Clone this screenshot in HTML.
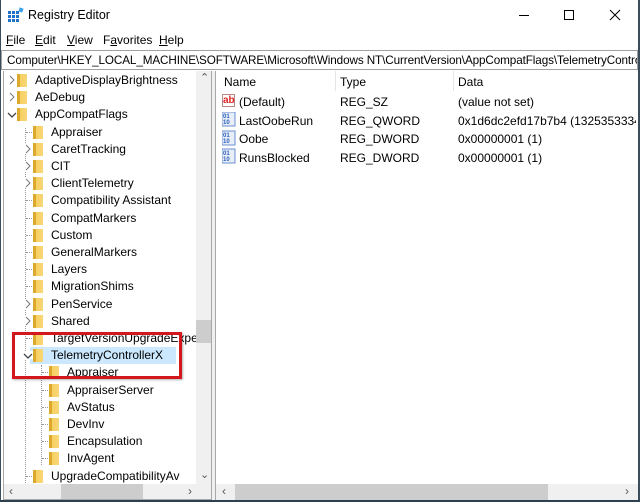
<!DOCTYPE html>
<html><head><meta charset="utf-8"><style>
*{margin:0;padding:0;box-sizing:border-box}
html,body{width:640px;height:502px;overflow:hidden}
body{background:#fff;font-family:"Liberation Sans",sans-serif;font-size:12px;color:#000;position:relative}
.a{position:absolute;white-space:nowrap}
.fold{position:absolute;width:10px;height:13px;background:linear-gradient(90deg,#dca92f 0,#dca92f 3px,#f6cf62 3px,#f8d776 100%)}
.arr{position:absolute;color:#777;font-size:11px;background:#fff}
.t{position:absolute;line-height:17px;height:17px}
.dash{position:absolute;border-top:1px dotted #999;width:6px}
.vl{position:absolute;border-left:1px dotted #999}
.ico{position:absolute;width:13px;height:13px}
</style></head><body>
<div class="a" style="left:0;top:0;width:1px;height:502px;background:#3b4d5a"></div>
<div class="a" style="left:638px;top:0;width:2px;height:502px;background:#3b4d5a"></div>
<div class="a" style="left:0;top:500px;width:640px;height:2px;background:#2d4150"></div>
<svg class="a" style="left:8px;top:7px" width="16" height="16" viewBox="0 0 16 16">
<g fill="#1e73c9"><rect x="0" y="4" width="3" height="3"/><rect x="4" y="4" width="3" height="3"/><rect x="8" y="4" width="3" height="3"/>
<rect x="0" y="8" width="3" height="3"/><rect x="4" y="8" width="3" height="3"/><rect x="8" y="8" width="3" height="3"/>
<rect x="0" y="12" width="3" height="3"/><rect x="4" y="12" width="3" height="3"/><rect x="8" y="12" width="3" height="3"/></g>
<rect x="11" y="1" width="4" height="4" fill="#3aa0e8" transform="rotate(20 13 3)"/></svg>
<div class="a" style="left:28px;top:8px;font-size:12.5px">Registry Editor</div>
<div class="a" style="left:519px;top:15px;width:10px;height:1px;background:#000"></div>
<div class="a" style="left:564px;top:10px;width:10px;height:10px;border:1px solid #000"></div>
<svg class="a" style="left:609px;top:9px" width="12" height="12"><path d="M1 1L11 11M11 1L1 11" stroke="#000" stroke-width="1"/></svg>
<div class="a" style="left:6px;top:33px"><u>F</u>ile</div>
<div class="a" style="left:35px;top:33px"><u>E</u>dit</div>
<div class="a" style="left:67px;top:33px"><u>V</u>iew</div>
<div class="a" style="left:103px;top:33px">F<u>a</u>vorites</div>
<div class="a" style="left:159px;top:33px"><u>H</u>elp</div>
<div class="a" style="left:1px;top:50px;width:637px;height:20px;border:1px solid #a0a0a0;overflow:hidden;padding:3px 0 0 5px;font-size:11.7px;letter-spacing:-0.1px">Computer\HKEY_LOCAL_MACHINE\SOFTWARE\Microsoft\Windows NT\CurrentVersion\AppCompatFlags\TelemetryControllerX</div>
<div class="a" style="left:3px;top:71px;width:209px;height:429px;border:1px solid #a8a8a8;border-top:none;overflow:hidden">
<div id="tree" style="position:absolute;left:-4px;top:0;width:196px;height:413px;overflow:hidden">
<div class="vl" style="left:25px;top:57px;height:405px"></div>
<div class="vl" style="left:41px;top:294px;height:100px"></div>
<div class="a" style="left:30px;top:276px;width:146px;height:17px;background:#cce8ff"></div>
</div>
<div class="a" style="left:192px;top:0;width:16px;height:413px;background:#f0f0f0"></div>
<div class="a" style="left:192px;top:249px;width:16px;height:23px;background:#cdcdcd"></div>
<div class="a" style="left:196px;top:0px;color:#555;font-size:11px">&#8963;</div>
<div class="a" style="left:196px;top:397px;color:#555;font-size:11px">&#8964;</div>
<div class="a" style="left:0;top:413px;width:208px;height:16px;background:#f0f0f0"></div>
<div class="a" style="left:57px;top:413px;width:82px;height:16px;background:#cdcdcd"></div>
<div class="a" style="left:5px;top:413px;color:#555;font-size:12px">&#8249;</div>
<div class="a" style="left:184px;top:413px;color:#555;font-size:12px">&#8250;</div>
</div>
<div class="a" style="left:212px;top:71px;width:4px;height:429px;background:#f0f0f0;border-right:1px solid #a8a8a8"></div>
<div class="a" style="left:216px;top:71px;width:422px;height:429px">
<div class="a" style="left:8px;top:4px">Name</div>
<div class="a" style="left:119px;top:0;width:1px;height:20px;background:#e5e5e5"></div>
<div class="a" style="left:124px;top:4px">Type</div>
<div class="a" style="left:237px;top:0;width:1px;height:20px;background:#e5e5e5"></div>
<div class="a" style="left:242px;top:4px">Data</div>
<div class="a" style="left:0;top:413px;width:422px;height:16px;background:#f0f0f0"></div>
<div class="a" style="left:19px;top:413px;width:313px;height:16px;background:#cdcdcd"></div>
<div class="a" style="left:6px;top:413px;color:#555;font-size:12px">&#8249;</div>
<div class="a" style="left:409px;top:413px;color:#555;font-size:12px">&#8250;</div>
</div>
<div class="ico" style="left:222px;top:94px;border:1px solid #b88;background:#fff;color:#d22;font-size:10px;font-weight:bold;line-height:11px;text-align:center">ab</div>
<div class="a" style="left:239px;top:95px">(Default)</div>
<div class="a" style="left:340px;top:95px">REG_SZ</div>
<div class="a" style="left:458px;top:95px">(value not set)</div>
<div class="a" style="left:239px;top:114px">LastOobeRun</div>
<div class="a" style="left:340px;top:114px">REG_QWORD</div>
<div class="a" style="left:458px;top:114px;width:178px;overflow:hidden">0x1d6dc2efd17b7b4 (132535333424</div>
<div class="a" style="left:239px;top:132px">Oobe</div>
<div class="a" style="left:340px;top:132px">REG_DWORD</div>
<div class="a" style="left:458px;top:132px">0x00000001 (1)</div>
<div class="a" style="left:239px;top:151px">RunsBlocked</div>
<div class="a" style="left:340px;top:151px">REG_DWORD</div>
<div class="a" style="left:458px;top:151px">0x00000001 (1)</div>
<svg class="a" style="left:222px;top:112px" width="14" height="60">
<g fill="#2a5fb8" font-family="Liberation Sans" font-size="6" font-weight="bold">
<rect x="0" y="0" width="13" height="14" fill="#e8eef8" stroke="#6a8fd0"/><text x="1" y="6">01</text><text x="1" y="12">10</text>
<rect x="0" y="19" width="13" height="14" fill="#e8eef8" stroke="#6a8fd0"/><text x="1" y="25">01</text><text x="1" y="31">10</text>
<rect x="0" y="37" width="13" height="14" fill="#e8eef8" stroke="#6a8fd0"/><text x="1" y="43">01</text><text x="1" y="49">10</text></g></svg>
<div class="a" style="left:12px;top:332px;width:170px;height:47px;border:3px solid #d4161d;box-shadow:1px 1px 2px rgba(0,0,0,.3)"></div>
<script>
var items=[[1,'>','AdaptiveDisplayBrightness'],[1,'>','AeDebug'],[1,'v','AppCompatFlags'],[2,'-','Appraiser'],[2,'>','CaretTracking'],[2,'>','CIT'],[2,'>','ClientTelemetry'],[2,'-','Compatibility Assistant'],[2,'-','CompatMarkers'],[2,'-','Custom'],[2,'-','GeneralMarkers'],[2,'-','Layers'],[2,'-','MigrationShims'],[2,'>','PenService'],[2,'>','Shared'],[2,'-','TargetVersionUpgradeExper'],[2,'v','TelemetryControllerX'],[3,'-','Appraiser'],[3,'-','AppraiserServer'],[3,'-','AvStatus'],[3,'-','DevInv'],[3,'-','Encapsulation'],[3,'-','InvAgent'],[2,'-','UpgradeCompatibilityAv']];
var t=document.getElementById('tree'),h='';
items.forEach(function(it,i){var top=Math.round(71+17.2*i)-71+1;var L=it[0];var base=(L-1)*16;
var ax=base+8,fx=base+17,tx=base+35;
if(it[1]=='>')h+='<div class="arr" style="left:'+ax+'px;top:'+(top+3)+'px;width:8px;height:10px"><svg width="8" height="10"><path d="M2 1L6 5L2 9" stroke="#777" fill="none"/></svg></div>';
else if(it[1]=='v')h+='<div class="arr" style="left:'+(ax-1)+'px;top:'+(top+4)+'px;width:10px;height:8px"><svg width="10" height="8"><path d="M1 2L5 6L9 2" stroke="#444" fill="none" stroke-width="1.3"/></svg></div>';
else h+='<div class="dash" style="left:'+(base+10)+'px;top:'+(top+8)+'px"></div>';
h+='<div class="fold" style="left:'+fx+'px;top:'+(top+2)+'px"></div>';
h+='<div class="t" style="left:'+tx+'px;top:'+top+'px">'+it[2]+'</div>';});
t.insertAdjacentHTML('beforeend',h);
</script>
</body></html>
